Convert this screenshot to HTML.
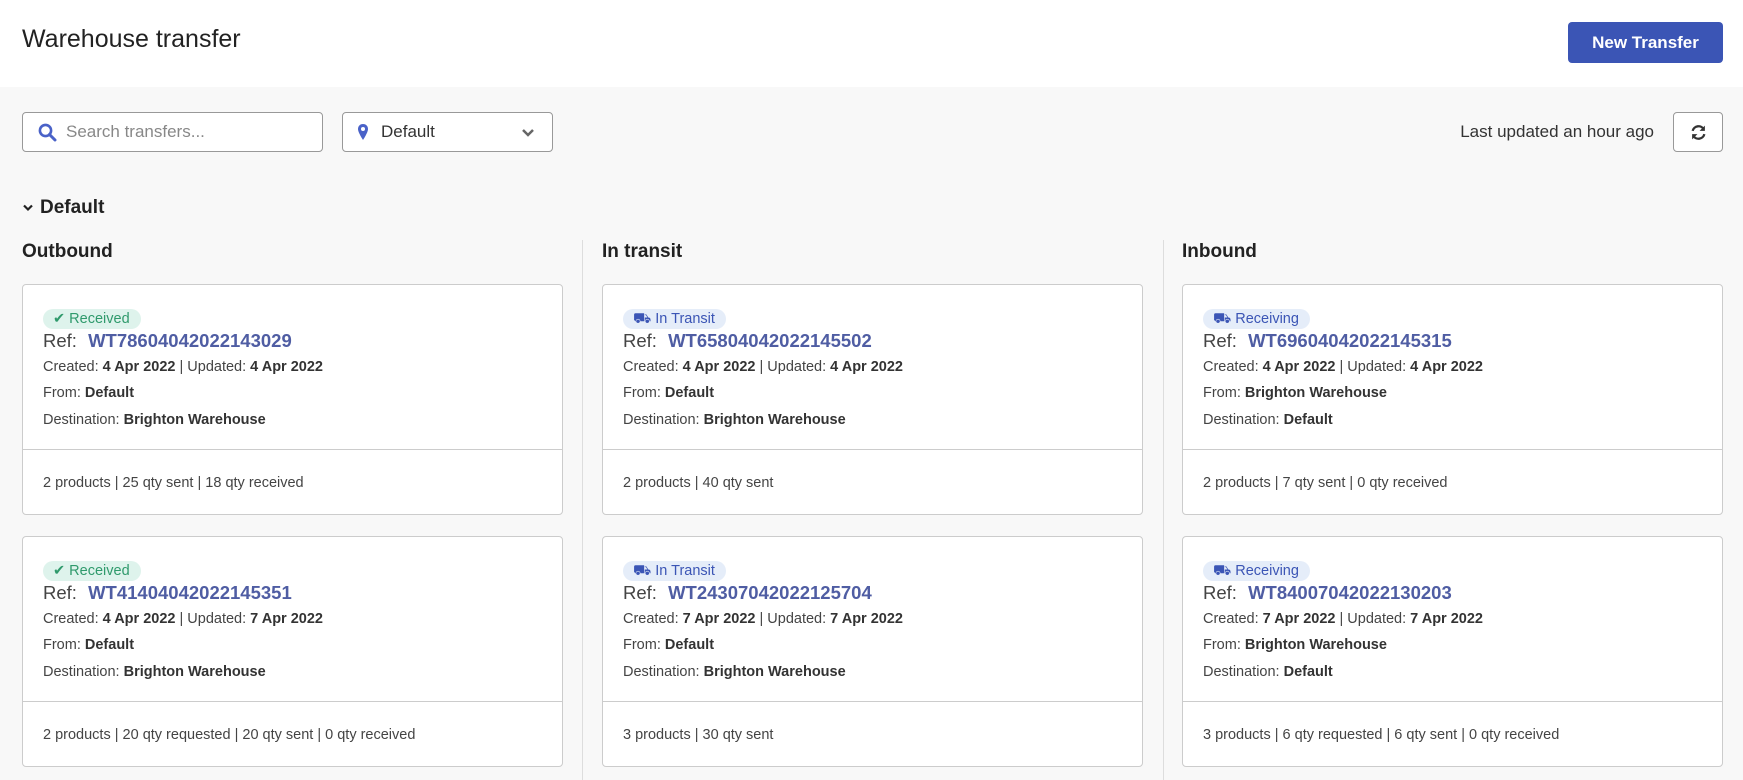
<!DOCTYPE html>
<html><head><meta charset="utf-8"><style>
*{box-sizing:border-box;margin:0;padding:0}
body{width:1743px;height:780px;overflow:hidden;background:#f8f8f8;font-family:"Liberation Sans",sans-serif;color:#333;position:relative}
.hdr{position:absolute;left:0;top:0;width:1743px;height:87px;background:#fff}
.title{position:absolute;left:22px;top:25px;font-size:25px;color:#222}
.btn{position:absolute;left:1568px;top:22px;width:155px;height:41px;background:#3b55b5;border-radius:4px;color:#fff;font-weight:bold;font-size:17px;text-align:center;line-height:41px}
.inp{position:absolute;top:112px;height:40px;border:1px solid #999;border-radius:4px;background:#fff;font-size:17px;line-height:38px}
.upd{position:absolute;right:89px;top:122px;font-size:17px;color:#333}
.ref{position:absolute;left:1673px;top:112px;width:50px;height:40px;border:1px solid #999;border-radius:4px;background:#fff}
.sec{position:absolute;left:22px;top:197px;font-size:19px;font-weight:bold;color:#222}
.colh{position:absolute;top:241px;font-size:19px;font-weight:bold;color:#222}
.div{position:absolute;top:240px;width:1px;height:540px;background:#ddd}
.card{position:absolute;width:541px;height:231px;background:#fff;border:1px solid #ccc;border-radius:4px}
.badge{position:absolute;left:20px;top:24px;height:20px;border-radius:10px;padding:0 11px 0 10px;font-size:14.5px;line-height:20px}
.g{background:#def3ec;color:#2f9a6c}
.b{background:#e5edf9;color:#3b55b5}
.r{position:absolute;left:20px;top:45px;font-size:18.5px;color:#444}
.r b{color:#4f5da3;margin-left:6px}
.l{position:absolute;left:20px;font-size:14.5px;color:#444}
.l b{color:#333}
.sep{position:absolute;left:0;right:0;top:164px;height:1px;background:#ccc}
.f{position:absolute;left:20px;top:190px;font-size:14.5px;color:#444}
</style></head><body>
<div class="hdr"></div>
<div class="title">Warehouse transfer</div>
<div class="btn">New Transfer</div>
<div class="inp" style="left:22px;width:301px;color:#888;padding-left:43px">
<svg style="position:absolute;left:15px;top:10px" width="19" height="19" viewBox="0 0 19 19"><circle cx="7.5" cy="7.5" r="5.6" fill="none" stroke="#4a62c8" stroke-width="2.6"/><path d="M11.5 11.5L17 17" stroke="#4a62c8" stroke-width="3" stroke-linecap="round"/></svg>Search transfers...</div>
<div class="inp" style="left:342px;width:211px;color:#333;padding-left:38px">
<svg style="position:absolute;left:14px;top:10px" width="12" height="18" viewBox="0 0 12 18"><path d="M6 1C3 1 1 3.2 1 6c0 3.5 5 11 5 11s5-7.5 5-11c0-2.8-2-5-5-5z" fill="#4a62c8"/><circle cx="6" cy="6" r="2" fill="#fff"/></svg>Default
<svg style="position:absolute;left:178px;top:15px" width="14" height="10" viewBox="0 0 14 10"><path d="M2 2l5 5 5-5" fill="none" stroke="#666" stroke-width="2.5"/></svg></div>
<div class="upd">Last updated an hour ago</div>
<div class="ref"><svg style="position:absolute;left:16px;top:11px" width="17" height="17" viewBox="0 0 16 16"><path d="M2.5 6.5A5.7 5.7 0 0 1 13 5M13.5 9.5A5.7 5.7 0 0 1 3 11" fill="none" stroke="#333" stroke-width="2.2"/><path d="M14 1.5v5h-5zM2 14.5v-5h5z" fill="#333"/></svg></div>
<div class="sec"><svg width="12" height="10" viewBox="0 0 12 10" style="margin-right:6px"><path d="M2 2.5l4 4 4-4" fill="none" stroke="#222" stroke-width="2.2"/></svg>Default</div>
<div class="colh" style="left:22px">Outbound</div>
<div class="colh" style="left:602px">In transit</div>
<div class="colh" style="left:1182px">Inbound</div>
<div class="div" style="left:582px"></div>
<div class="div" style="left:1163px"></div>

<div class="card" style="left:22px;top:284px"><span class="badge g">✔ Received</span><div class="r">Ref: <b>WT78604042022143029</b></div><div class="l" style="top:74px">Created: <b>4 Apr 2022</b> | Updated: <b>4 Apr 2022</b></div><div class="l" style="top:100px">From: <b>Default</b></div><div class="l" style="top:127px">Destination: <b>Brighton Warehouse</b></div><div class="sep"></div><div class="f">2 products | 25 qty sent | 18 qty received</div></div>
<div class="card" style="left:22px;top:536px"><span class="badge g">✔ Received</span><div class="r">Ref: <b>WT41404042022145351</b></div><div class="l" style="top:74px">Created: <b>4 Apr 2022</b> | Updated: <b>7 Apr 2022</b></div><div class="l" style="top:100px">From: <b>Default</b></div><div class="l" style="top:127px">Destination: <b>Brighton Warehouse</b></div><div class="sep"></div><div class="f">2 products | 20 qty requested | 20 qty sent | 0 qty received</div></div>
<div class="card" style="left:602px;top:284px"><span class="badge b">⛟ In Transit</span><div class="r">Ref: <b>WT65804042022145502</b></div><div class="l" style="top:74px">Created: <b>4 Apr 2022</b> | Updated: <b>4 Apr 2022</b></div><div class="l" style="top:100px">From: <b>Default</b></div><div class="l" style="top:127px">Destination: <b>Brighton Warehouse</b></div><div class="sep"></div><div class="f">2 products | 40 qty sent</div></div>
<div class="card" style="left:602px;top:536px"><span class="badge b">⛟ In Transit</span><div class="r">Ref: <b>WT24307042022125704</b></div><div class="l" style="top:74px">Created: <b>7 Apr 2022</b> | Updated: <b>7 Apr 2022</b></div><div class="l" style="top:100px">From: <b>Default</b></div><div class="l" style="top:127px">Destination: <b>Brighton Warehouse</b></div><div class="sep"></div><div class="f">3 products | 30 qty sent</div></div>
<div class="card" style="left:1182px;top:284px"><span class="badge b">⛟ Receiving</span><div class="r">Ref: <b>WT69604042022145315</b></div><div class="l" style="top:74px">Created: <b>4 Apr 2022</b> | Updated: <b>4 Apr 2022</b></div><div class="l" style="top:100px">From: <b>Brighton Warehouse</b></div><div class="l" style="top:127px">Destination: <b>Default</b></div><div class="sep"></div><div class="f">2 products | 7 qty sent | 0 qty received</div></div>
<div class="card" style="left:1182px;top:536px"><span class="badge b">⛟ Receiving</span><div class="r">Ref: <b>WT84007042022130203</b></div><div class="l" style="top:74px">Created: <b>7 Apr 2022</b> | Updated: <b>7 Apr 2022</b></div><div class="l" style="top:100px">From: <b>Brighton Warehouse</b></div><div class="l" style="top:127px">Destination: <b>Default</b></div><div class="sep"></div><div class="f">3 products | 6 qty requested | 6 qty sent | 0 qty received</div></div>
</body></html>
